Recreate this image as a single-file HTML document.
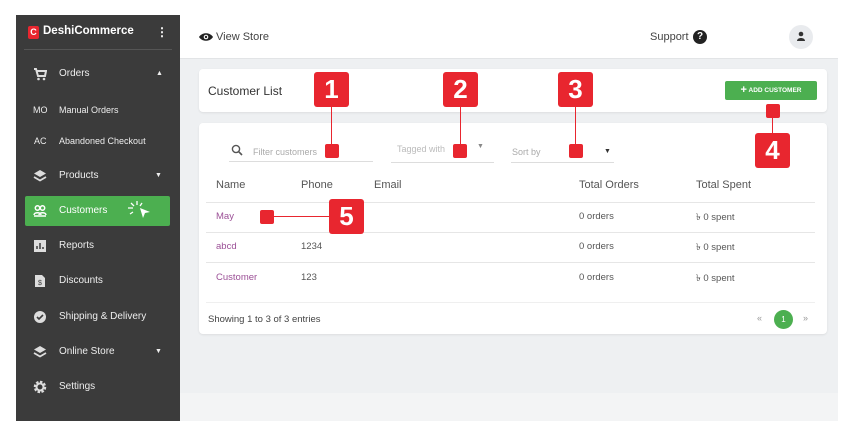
<!DOCTYPE html>
<html><head><meta charset="utf-8"><style>
*{margin:0;padding:0;box-sizing:border-box}
body{width:850px;height:435px;background:#fff;position:relative;overflow:hidden;font-family:"Liberation Sans",sans-serif;}
.a{position:absolute}
.sb{left:16px;top:15px;width:164px;height:406px;background:#3b3b3b;color:#eee;font-size:10px}
.it{position:absolute;left:0;width:164px;height:20px;line-height:20px}
.it .ic{position:absolute;left:17px;width:14px;height:14px;top:3px}
.it .tx{position:absolute;left:43px}
.main{left:180px;top:15px;width:658px;height:406px;background:#eef0f2}
.top{left:180px;top:15px;width:658px;height:44px;background:#fff;border-bottom:1px solid #e2e4e6}
.card{background:#fff;border-radius:4px;box-shadow:0 1px 2px rgba(0,0,0,.08)}
.bd{background:#e8262f;color:#fff;font-weight:bold;font-size:26px;text-align:center;line-height:35px;width:35px;height:35px;border-radius:3px}
.sq{background:#e8262f;width:14px;height:14px;border-radius:2px}
.ln{background:#e8262f}
.th{font-size:11px;color:#555}
.td{font-size:9.5px;color:#555}
.nm{color:#9b4f96}
</style></head><body>
<div class="a sb">
 <div class="a" style="left:12px;top:11px;width:11px;height:13px;background:#e8262f;border-radius:2px;color:#fff;font-size:9px;font-weight:bold;text-align:center;line-height:13px">C</div>
 <div class="a" style="left:27px;top:10px;font-weight:bold;font-size:11.5px;color:#fff">DeshiCommerce</div>
 <div class="a" style="left:140px;top:10px;font-weight:bold;font-size:12px;color:#fff">⋮</div>
 <div class="a" style="left:8px;top:34px;width:148px;height:1px;background:#555"></div>
 <div class="it" style="top:49px"><svg class="ic" viewBox="0 0 14 14"><path d="M1 2h2l2 7h7l1-5H4" fill="none" stroke="#ddd" stroke-width="2"/><circle cx="5.5" cy="12" r="1.3" fill="#ddd"/><circle cx="11" cy="12" r="1.3" fill="#ddd"/></svg><span class="tx">Orders</span><span class="a" style="left:140px;font-size:7px">▲</span></div>
 <div class="it" style="top:85px;font-size:9px"><span class="a" style="left:17px">MO</span><span class="tx">Manual Orders</span></div>
 <div class="it" style="top:116px;font-size:9px"><span class="a" style="left:18px">AC</span><span class="tx">Abandoned Checkout</span></div>
 <div class="it" style="top:151px"><svg class="ic" viewBox="0 0 14 14"><path d="M7 1l6 3.5-6 3.5-6-3.5z" fill="#ddd"/><path d="M1 8l6 3.5 6-3.5" fill="none" stroke="#ddd" stroke-width="1.8"/></svg><span class="tx">Products</span><span class="a" style="left:139px;font-size:7px">▼</span></div>
 <div class="a" style="left:9px;top:181px;width:145px;height:30px;background:#4caf50;border-radius:2px"></div>
 <div class="it" style="top:186px;color:#fff"><svg class="ic" viewBox="0 0 14 14"><circle cx="4.5" cy="4" r="2.2" fill="none" stroke="#fff" stroke-width="1.5"/><circle cx="9.5" cy="4" r="2.2" fill="none" stroke="#fff" stroke-width="1.5"/><path d="M1 11c0-3 7-3 7 0M6 11c0-3 7-3 7 0M1 12h12" fill="none" stroke="#fff" stroke-width="1.5"/></svg><span class="tx">Customers</span>
 <svg class="a" style="left:110px;top:0" width="26" height="20" viewBox="0 0 26 20"><path d="M14 7l10 4-5 1-2 5z" fill="#fff"/><path d="M2 7h5M11 0v4M5 2l3 3M16 2l-2 3M4 13l3-2" stroke="#fff" stroke-width="1.3"/></svg></div>
 <div class="it" style="top:221px"><svg class="ic" viewBox="0 0 14 14"><rect x="1" y="1" width="12" height="12" fill="#ddd"/><path d="M4 10V7M7 10V4M10 10V8" stroke="#3b3b3b" stroke-width="1.5"/></svg><span class="tx">Reports</span></div>
 <div class="it" style="top:256px"><svg class="ic" viewBox="0 0 14 14"><path d="M2 1h7l3 3v9H2z" fill="#ddd"/><text x="7" y="11" font-size="7" text-anchor="middle" fill="#3b3b3b" font-family="Liberation Sans">$</text></svg><span class="tx">Discounts</span></div>
 <div class="it" style="top:292px"><svg class="ic" viewBox="0 0 14 14"><circle cx="7" cy="7" r="6" fill="#ddd"/><path d="M4 7l2 2 4-4" fill="none" stroke="#3b3b3b" stroke-width="1.6"/></svg><span class="tx">Shipping &amp; Delivery</span></div>
 <div class="it" style="top:327px"><svg class="ic" viewBox="0 0 14 14"><path d="M7 1l6 3.5-6 3.5-6-3.5z" fill="#ddd"/><path d="M1 8l6 3.5 6-3.5" fill="none" stroke="#ddd" stroke-width="1.8"/></svg><span class="tx">Online Store</span><span class="a" style="left:139px;font-size:7px">▼</span></div>
 <div class="it" style="top:362px"><svg class="ic" viewBox="0 0 14 14"><circle cx="7" cy="7" r="4.5" fill="none" stroke="#ddd" stroke-width="3.5" stroke-dasharray="2.2 1.3"/><circle cx="7" cy="7" r="3.5" fill="none" stroke="#ddd" stroke-width="2"/></svg><span class="tx">Settings</span></div>
</div>
<div class="a main"></div>
<div class="a" style="left:180px;top:393px;width:658px;height:28px;background:#f3f4f5"></div>
<div class="a top"></div>
<svg class="a" style="left:199px;top:32px" width="14" height="10" viewBox="0 0 14 10"><path d="M0 5C3 0 11 0 14 5 11 10 3 10 0 5z" fill="#222"/><circle cx="7" cy="5" r="2.3" fill="#fff"/><circle cx="7" cy="5" r="1.2" fill="#222"/></svg>
<div class="a" style="left:216px;top:31px;font-size:11px;color:#444">View Store</div>
<div class="a" style="left:650px;top:31px;font-size:11px;color:#444">Support</div>
<div class="a" style="left:693px;top:30px;width:14px;height:14px;border-radius:50%;background:#222;color:#fff;font-size:10px;font-weight:bold;text-align:center;line-height:14px">?</div>
<div class="a" style="left:789px;top:25px;width:24px;height:24px;border-radius:50%;background:#e9ebee"></div>
<svg class="a" style="left:796px;top:31px" width="10" height="11" viewBox="0 0 10 11"><circle cx="5" cy="3" r="2.3" fill="#333"/><path d="M1 10c0-4 8-4 8 0z" fill="#333"/></svg>

<div class="a card" style="left:199px;top:69px;width:628px;height:43px"></div>
<div class="a" style="left:208px;top:84px;font-size:12px;color:#333">Customer List</div>
<div class="a" style="left:725px;top:81px;width:92px;height:19px;background:#4caf50;border-radius:2px;color:#fff;font-size:6.5px;font-weight:bold;line-height:19px;text-align:center"><span style="font-size:11px;vertical-align:-1px">+</span> ADD CUSTOMER</div>

<div class="a card" style="left:199px;top:123px;width:628px;height:211px"></div>
<svg class="a" style="left:231px;top:144px" width="12" height="12" viewBox="0 0 12 12"><circle cx="5" cy="5" r="3.6" fill="none" stroke="#555" stroke-width="1.4"/><path d="M7.6 7.6L11 11" stroke="#555" stroke-width="1.6"/></svg>
<div class="a" style="left:253px;top:147px;font-size:9px;color:#aaa">Filter customers</div>
<div class="a" style="left:229px;top:161px;width:144px;height:1px;background:#ddd"></div>
<div class="a" style="left:397px;top:144px;font-size:9px;color:#bbb">Tagged with</div>
<div class="a" style="left:477px;top:143px;font-size:7px;color:#888">▼</div>
<div class="a" style="left:391px;top:162px;width:103px;height:1px;background:#ddd"></div>
<div class="a" style="left:512px;top:147px;font-size:9px;color:#aaa">Sort by</div>
<div class="a" style="left:604px;top:148px;font-size:7px;color:#333">▼</div>
<div class="a" style="left:511px;top:162px;width:103px;height:1px;background:#ddd"></div>

<div class="a th" style="left:216px;top:179px">Name</div>
<div class="a th" style="left:301px;top:179px">Phone</div>
<div class="a th" style="left:374px;top:179px">Email</div>
<div class="a th" style="left:579px;top:179px">Total Orders</div>
<div class="a th" style="left:696px;top:179px">Total Spent</div>
<div class="a" style="left:206px;top:202px;width:609px;height:1px;background:#e6e6e6"></div>
<div class="a td nm" style="left:216px;top:211px">May</div>
<div class="a td" style="left:579px;top:211px">0 orders</div>
<div class="a td" style="left:696px;top:211px">৳ 0 spent</div>
<div class="a" style="left:206px;top:232px;width:609px;height:1px;background:#e6e6e6"></div>
<div class="a td nm" style="left:216px;top:241px">abcd</div>
<div class="a td" style="left:301px;top:241px">1234</div>
<div class="a td" style="left:579px;top:241px">0 orders</div>
<div class="a td" style="left:696px;top:241px">৳ 0 spent</div>
<div class="a" style="left:206px;top:262px;width:609px;height:1px;background:#e6e6e6"></div>
<div class="a td nm" style="left:216px;top:272px">Customer</div>
<div class="a td" style="left:301px;top:272px">123</div>
<div class="a td" style="left:579px;top:272px">0 orders</div>
<div class="a td" style="left:696px;top:272px">৳ 0 spent</div>
<div class="a" style="left:206px;top:302px;width:609px;height:1px;background:#efefef"></div>
<div class="a td" style="left:208px;top:314px;color:#444">Showing 1 to 3 of 3 entries</div>
<div class="a" style="left:757px;top:313px;font-size:9px;color:#999">«</div>
<div class="a" style="left:774px;top:310px;width:19px;height:19px;border-radius:50%;background:#4caf50;color:#fff;font-size:8px;text-align:center;line-height:19px">1</div>
<div class="a" style="left:803px;top:313px;font-size:9px;color:#999">»</div>

<div class="a ln" style="left:331px;top:107px;width:1px;height:40px"></div>
<div class="a bd" style="left:314px;top:72px">1</div>
<div class="a sq" style="left:325px;top:144px"></div>
<div class="a ln" style="left:460px;top:107px;width:1px;height:40px"></div>
<div class="a bd" style="left:443px;top:72px">2</div>
<div class="a sq" style="left:453px;top:144px"></div>
<div class="a ln" style="left:575px;top:107px;width:1px;height:40px"></div>
<div class="a bd" style="left:558px;top:72px">3</div>
<div class="a sq" style="left:569px;top:144px"></div>
<div class="a ln" style="left:772px;top:115px;width:1px;height:20px"></div>
<div class="a sq" style="left:766px;top:104px"></div>
<div class="a bd" style="left:755px;top:133px">4</div>
<div class="a ln" style="left:272px;top:216px;width:58px;height:1px"></div>
<div class="a sq" style="left:260px;top:210px"></div>
<div class="a bd" style="left:329px;top:199px">5</div>
</body></html>
